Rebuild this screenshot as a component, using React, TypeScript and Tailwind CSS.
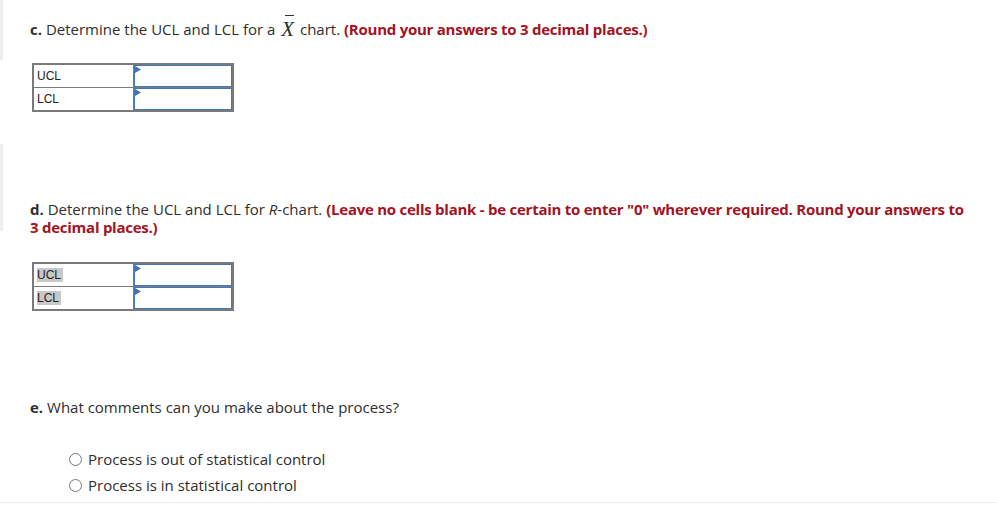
import React from "react";

const font = { fontFamily: "'Open Sans', Lato, sans-serif" };

function Triangle() {
  return (
    <svg className="absolute left-0 top-0" width="6" height="7" viewBox="0 0 6 7">
      <polygon points="0,0 6,3.5 0,7" fill="#3f72b8" />
    </svg>
  );
}

function InputCell() {
  return (
    <td className="border border-[#7a7a7a] p-0 w-[100px] h-[23px]">
      <div className="relative h-[22px] border-[1.5px] border-[#4477b9]">
        <Triangle />
      </div>
    </td>
  );
}

function LimitTable({ highlight }: { highlight?: boolean }) {
  return (
    <table className="border-collapse border-2 border-[#7a7a7a] ml-[32px]">
      <tbody>
        {["UCL", "LCL"].map((l) => (
          <tr key={l}>
            <td
              className="border border-[#7a7a7a] w-[100px] h-[23px] px-[3px] py-0 text-[12px] text-[#222] align-middle"
              style={{ fontFamily: "'Liberation Sans', Arial, sans-serif" }}
            >
              <span className={highlight ? "bg-[#c8c8c8] pr-[2px]" : ""}>{l}</span>
            </td>
            <InputCell />
          </tr>
        ))}
      </tbody>
    </table>
  );
}

function Radio({ label }: { label: string }) {
  return (
    <div className="flex items-center h-[26px]">
      <span className="w-[13px] h-[13px] rounded-full border border-[#777] bg-white mr-[6px]" />
      <span>{label}</span>
    </div>
  );
}

export default function App() {
  return (
    <div className="w-[997px] h-[508px] bg-white text-[15px] text-[#2e2e2e] leading-[18px] relative" style={font}>
      <div className="border-l-[3px] border-[#eeeeee] h-[60px] pt-[20px] pl-[27px]">
        <span className="font-bold">c.</span> Determine the UCL and LCL for a{" "}
        <span className="relative inline-block italic text-[21px] leading-[14px] align-[-1px] mx-[2px]" style={{ fontFamily: "'Liberation Serif', 'Times New Roman', serif" }}>
          X
          <span className="absolute left-[4px] top-[-7px] w-[9px] h-[1px] bg-[#333]" />
        </span>{" "}
        chart. <span className="font-bold tracking-[-0.25px] text-[#a3131f]">(Round your answers to 3 decimal places.)</span>
      </div>
      <div className="mt-[3px]">
        <LimitTable />
      </div>
      <div className="mt-[32px] border-l-[3px] border-[#eeeeee] h-[87px] pt-[56px] pl-[27px]">
        <span className="font-bold">d.</span> Determine the UCL and LCL for <span className="italic">R</span>-chart.{" "}
        <span className="font-bold tracking-[-0.25px] text-[#a3131f]">
          (Leave no cells blank - be certain to enter "0" wherever required. Round your answers to
          <br />3 decimal places.)
        </span>
      </div>
      <div className="mt-[31px]">
        <LimitTable highlight />
      </div>
      <div className="mt-[87px] pl-[30px]">
        <span className="font-bold">e.</span> What comments can you make about the process?
      </div>
      <div className="mt-[30px] pl-[69px]">
        <Radio label="Process is out of statistical control" />
        <Radio label="Process is in statistical control" />
      </div>
      <div className="absolute left-0 right-0 top-[502px] h-[1px] bg-[#eeeeee]" />
    </div>
  );
}
